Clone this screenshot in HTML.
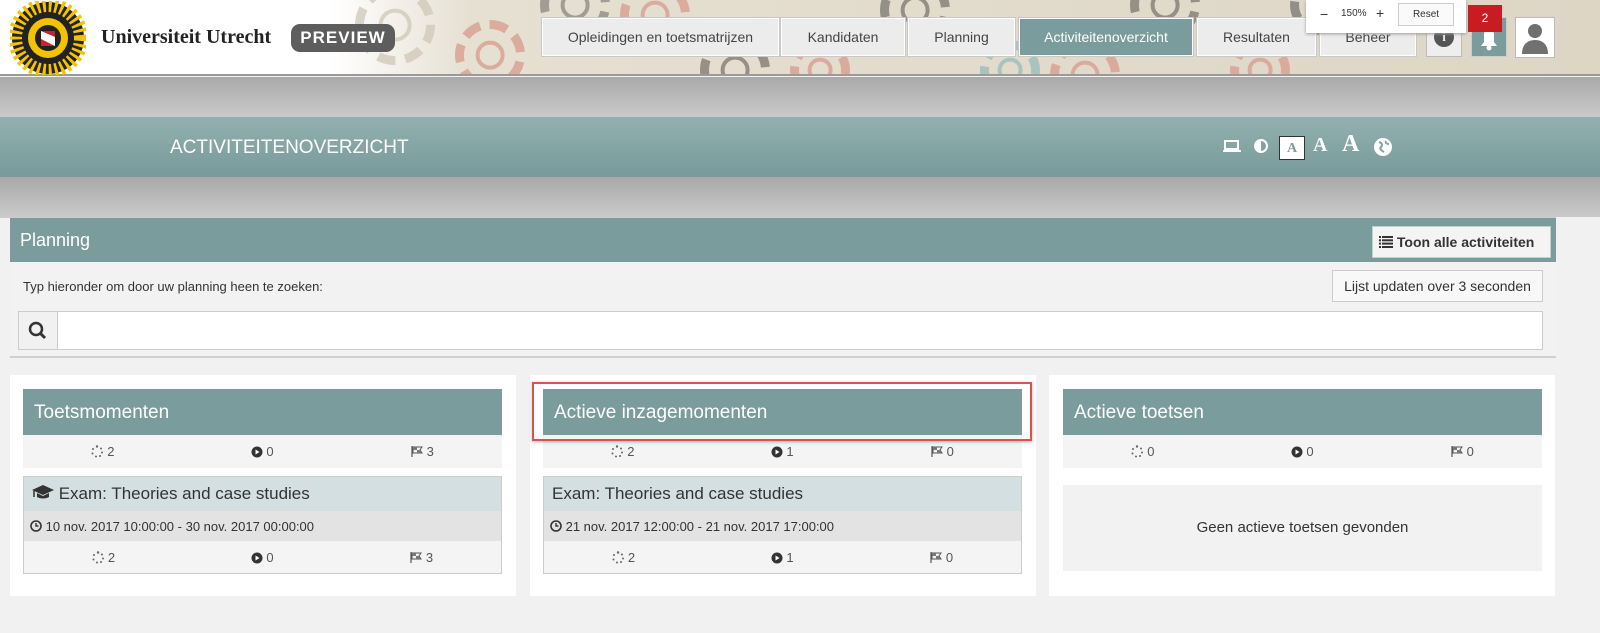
<!DOCTYPE html>
<html><head><meta charset="utf-8"><style>
*{box-sizing:border-box;margin:0;padding:0}
body{width:1600px;height:633px;overflow:hidden;background:#f1f1f1;font-family:"Liberation Sans",sans-serif;position:relative;color:#333}
.a{position:absolute}
.hdr{left:0;top:0;width:1600px;height:76px;background:linear-gradient(90deg,#fff 0,#fff 330px,#e6e0d2 470px,#ddd6c5 100%);overflow:hidden;border-bottom:2px solid #9a9a9a}
.g{position:absolute;border-radius:50%;border:9px dashed;opacity:.75}
.g::after{content:"";position:absolute;left:50%;top:50%;width:40%;height:40%;transform:translate(-50%,-50%);border-radius:50%;border:4px solid;border-color:inherit}
.nav{top:18px;height:38px;background:#ececec;border:1px solid #fff;box-shadow:0 0 0 1px #c8c8c8;font-size:14px;color:#444;display:flex;align-items:center;justify-content:center}
.band{left:0;width:1600px;height:41px;background:linear-gradient(#a9a9a9,#cbcbcb)}
.teal{left:0;top:117px;width:1600px;height:60px;background:linear-gradient(#93b0b0,#789a9a)}
.card{background:#fff}
.ch{background:#7a9c9c;color:#fff;font-size:19px;padding:13px 11px;height:46px}
.st{background:#f4f4f4;height:33px;display:flex;font-size:13px;color:#555;align-items:center}
.st span{flex:1;text-align:center}
.st svg{vertical-align:-2px;margin-right:3px}
.it{border:1px solid #ccc;background:#f4f4f4}
.ih{background:#d4dfe1;height:34px;font-size:17px;padding:7px 8px;color:#333}
.id{background:#e3e3e3;height:30px;font-size:13px;padding:8px 6px;color:#333}
</style></head><body>
<svg width="0" height="0" style="position:absolute"><defs>
<g id="sp"><g fill="#666"><circle cx="6" cy="1.5" r="1.2"/><circle cx="10" cy="3.5" r="1"/><circle cx="11" cy="7.5" r="1"/><circle cx="9" cy="11" r="1"/><circle cx="5" cy="11.5" r="1"/><circle cx="1.5" cy="8.5" r="1"/><circle cx="2" cy="4" r="1"/></g></g>
<g id="pl"><circle cx="6" cy="6" r="5.5" fill="#333"/><path d="M4.5 3.5v5l4-2.5z" fill="#fff"/></g>
<g id="fl"><path d="M1 1v11" stroke="#555" stroke-width="1.2"/><path d="M2 2h9l-2 3 2 3H2z" fill="none" stroke="#555"/><path d="M2 2h4v3H2zM6 5h4v3H6z" fill="#777"/></g>
</defs></svg>
<div class="a hdr">
 <div class="g" style="left:355px;top:-15px;width:80px;height:80px;border-color:#cfc8b8"></div>
 <div class="g" style="left:455px;top:20px;width:70px;height:70px;border-color:#d89b8c"></div>
 <div class="g" style="left:540px;top:-30px;width:70px;height:70px;border-color:#8c8780"></div>
 <div class="g" style="left:620px;top:-20px;width:70px;height:70px;border-color:#d89b8c"></div>
 <div class="g" style="left:700px;top:35px;width:70px;height:70px;border-color:#7c7770"></div>
 <div class="g" style="left:790px;top:40px;width:60px;height:60px;border-color:#d89b8c"></div>
 <div class="g" style="left:880px;top:-25px;width:70px;height:70px;border-color:#7c7770"></div>
 <div class="g" style="left:980px;top:40px;width:60px;height:60px;border-color:#9bb"></div>
 <div class="g" style="left:1050px;top:40px;width:70px;height:70px;border-color:#d89b8c"></div>
 <div class="g" style="left:1130px;top:-30px;width:70px;height:70px;border-color:#7c7770"></div>
 <div class="g" style="left:1230px;top:40px;width:60px;height:60px;border-color:#d89b8c"></div>
 <div class="g" style="left:1290px;top:-25px;width:60px;height:60px;border-color:#7c7770"></div>
</div>
<svg class="a" style="left:10px;top:1px" width="76" height="74" viewBox="0 0 76 74"><circle cx="38" cy="37" r="36" fill="#222"/><circle cx="38" cy="37" r="33" fill="none" stroke="#f3c300" stroke-width="14" stroke-dasharray="3 3"/><circle cx="38" cy="37" r="20" fill="#f3c300"/><circle cx="38" cy="37" r="13" fill="#222"/><rect x="31" y="30" width="14" height="15" fill="#fff"/><path d="M31 30h14v6z" fill="#c0262d"/><path d="M31 38l14 7H31z" fill="#c0262d"/></svg>
<div class="a" style="left:101px;top:26px;font-family:'Liberation Serif',serif;font-weight:bold;font-size:20px;color:#222">Universiteit Utrecht</div>
<div class="a" style="left:291px;top:24px;width:104px;height:28px;border-radius:9px;background:#5d5d5d;color:#fff;font-weight:bold;font-size:17px;text-align:center;line-height:28px;letter-spacing:1px">PREVIEW</div>
<div class="a nav" style="left:542px;width:237px">Opleidingen en toetsmatrijzen</div>
<div class="a nav" style="left:781px;width:124px">Kandidaten</div>
<div class="a nav" style="left:908px;width:107px">Planning</div>
<div class="a nav" style="left:1019px;width:174px;background:#7a9c9c;color:#fff">Activiteitenoverzicht</div>
<div class="a nav" style="left:1197px;width:119px">Resultaten</div>
<div class="a nav" style="left:1320px;width:96px">Beheer</div>
<div class="a" style="left:1426px;top:17px;width:36px;height:40px;background:#eee;border:1px solid #bbb"><div style="margin:9px auto;width:20px;height:20px;border-radius:50%;background:#555;color:#eee;font:bold 13px 'Liberation Serif';text-align:center;line-height:20px">i</div></div>
<div class="a" style="left:1471px;top:17px;width:36px;height:40px;background:#7a9c9c;border:1px solid #ccc"><svg width="34" height="38"><path d="M9 28h16l-3-4v-8a5 5 0 0 0-10 0v8z" fill="#fff"/><circle cx="17" cy="30" r="2.5" fill="#fff"/></svg></div>
<div class="a" style="left:1515px;top:17px;width:40px;height:41px;background:#fff;border:1px solid #bbb"><svg width="38" height="39"><circle cx="19" cy="13" r="7" fill="#707070"/><path d="M6 36c0-10 6-14 13-14s13 4 13 14z" fill="#707070"/></svg></div>
<div class="a" style="left:1306px;top:0;width:160px;height:33px;background:#fff;box-shadow:0 1px 3px #999"></div>
<div class="a" style="left:1320px;top:6px;font-size:14px;color:#333">−</div>
<div class="a" style="left:1341px;top:8px;font-size:10px;color:#333">150%</div>
<div class="a" style="left:1376px;top:5px;font-size:14px;color:#333">+</div>
<div class="a" style="left:1398px;top:3px;width:56px;height:23px;border:1px solid #ccc;background:#fafafa;font-size:10px;text-align:center;line-height:21px">Reset</div>
<div class="a" style="left:1468px;top:5px;width:34px;height:27px;background:#c61c22;color:#fff;font-size:12px;text-align:center;line-height:26px">2</div>
<div class="a band" style="top:77px"></div>
<div class="a teal"></div>
<div class="a" style="left:170px;top:137px;color:#fff;font-size:19px">ACTIVITEITENOVERZICHT</div>
<div class="a" style="left:1222px;top:137px;width:20px;height:18px"><svg width="20" height="18"><rect x="3" y="4" width="13" height="8" fill="none" stroke="#fff" stroke-width="2"/><rect x="1" y="13" width="18" height="2" fill="#fff"/></svg></div>
<div class="a" style="left:1253px;top:138px"><svg width="16" height="16"><circle cx="8" cy="8" r="7" fill="#fff"/><path d="M8 3a5 5 0 0 1 0 10z" fill="#84a4a4"/></svg></div>
<div class="a" style="left:1279px;top:136px;width:26px;height:24px;background:#fff;border:1px solid #333;color:#7a9c9c;font:bold 14px 'Liberation Serif';text-align:center;line-height:24px">A</div>
<div class="a" style="left:1313px;top:134px;color:#fff;font:bold 20px 'Liberation Serif'">A</div>
<div class="a" style="left:1342px;top:131px;color:#fff;font:bold 24px 'Liberation Serif'">A</div>
<div class="a" style="left:1374px;top:138px"><svg width="18" height="18"><circle cx="9" cy="9" r="9" fill="#fff"/><path d="M5 4c3 1 4 3 2 5s1 4 3 5M12 3c-1 2 1 3 3 3" stroke="#84a4a4" stroke-width="2" fill="none"/></svg></div>
<div class="a band" style="top:177px"></div>
<div class="a" style="left:1556px;top:217px;width:44px;height:416px;background:#f1f1f1"></div>
<div class="a" style="left:10px;top:218px;width:1546px;height:44px;background:#7a9c9c"></div>
<div class="a" style="left:20px;top:230px;color:#fff;font-size:18px">Planning</div>
<div class="a" style="left:1372px;top:226px;width:179px;height:32px;background:#f4f4f4;border:1px solid #ccc;font-weight:bold;font-size:14px;color:#333;line-height:30px;padding-left:6px"><svg width="14" height="12" style="vertical-align:-1px"><g fill="#333"><rect x="0" y="0" width="2" height="2"/><rect x="3" y="0" width="11" height="2"/><rect x="0" y="3.3" width="2" height="2"/><rect x="3" y="3.3" width="11" height="2"/><rect x="0" y="6.6" width="2" height="2"/><rect x="3" y="6.6" width="11" height="2"/><rect x="0" y="10" width="2" height="2"/><rect x="3" y="10" width="11" height="2"/></g></svg> Toon alle activiteiten</div>
<div class="a" style="left:10px;top:262px;width:1546px;height:96px;background:#f2f2f2;border-bottom:2px solid #d0d0d0"></div>
<div class="a" style="left:23px;top:279px;font-size:13px;color:#333">Typ hieronder om door uw planning heen te zoeken:</div>
<div class="a" style="left:1332px;top:270px;width:211px;height:32px;background:#f8f8f8;border:1px solid #ccc;font-size:14px;text-align:center;line-height:30px">Lijst updaten over 3 seconden</div>
<div class="a" style="left:18px;top:311px;width:1525px;height:39px;background:#fff;border:1px solid #ccc"></div>
<div class="a" style="left:18px;top:311px;width:40px;height:39px;background:#f1f1f1;border:1px solid #ccc"><svg width="38" height="37"><circle cx="17" cy="17" r="6" fill="none" stroke="#333" stroke-width="2.5"/><path d="M21 21l5 5" stroke="#333" stroke-width="3"/></svg></div>

<div class="a card" style="left:10px;top:375px;width:506px;height:221px"></div>
<div class="a card" style="left:530px;top:375px;width:506px;height:221px"></div>
<div class="a card" style="left:1049px;top:375px;width:506px;height:221px"></div>

<div class="a" style="left:23px;top:389px;width:479px"><div class="ch">Toetsmomenten</div><div class="st"><span><svg width="13" height="13"><use href="#sp"/></svg>2</span><span><svg width="12" height="12"><use href="#pl"/></svg>0</span><span><svg width="13" height="13"><use href="#fl"/></svg>3</span></div>
<div class="it" style="margin-top:8px"><div class="ih"><svg width="22" height="16" style="vertical-align:-1px"><path d="M0 6l11-5 11 5-11 5z" fill="#333"/><path d="M5 9v4c3 2 9 2 12 0V9l-6 3z" fill="#333"/><path d="M2 7v6" stroke="#333" stroke-width="1.5"/></svg> Exam: Theories and case studies</div><div class="id"><svg width="12" height="12" style="vertical-align:-1px"><circle cx="6" cy="6" r="5" fill="none" stroke="#333" stroke-width="1.6"/><path d="M6 3v3h2.5" stroke="#333" stroke-width="1.4" fill="none"/></svg> 10 nov. 2017 10:00:00 - 30 nov. 2017 00:00:00</div><div class="st" style="height:32px"><span><svg width="13" height="13"><use href="#sp"/></svg>2</span><span><svg width="12" height="12"><use href="#pl"/></svg>0</span><span><svg width="13" height="13"><use href="#fl"/></svg>3</span></div></div></div>

<div class="a" style="left:543px;top:389px;width:479px"><div class="ch">Actieve inzagemomenten</div><div class="st"><span><svg width="13" height="13"><use href="#sp"/></svg>2</span><span><svg width="12" height="12"><use href="#pl"/></svg>1</span><span><svg width="13" height="13"><use href="#fl"/></svg>0</span></div>
<div class="it" style="margin-top:8px"><div class="ih">Exam: Theories and case studies</div><div class="id"><svg width="12" height="12" style="vertical-align:-1px"><circle cx="6" cy="6" r="5" fill="none" stroke="#333" stroke-width="1.6"/><path d="M6 3v3h2.5" stroke="#333" stroke-width="1.4" fill="none"/></svg> 21 nov. 2017 12:00:00 - 21 nov. 2017 17:00:00</div><div class="st" style="height:32px"><span><svg width="13" height="13"><use href="#sp"/></svg>2</span><span><svg width="12" height="12"><use href="#pl"/></svg>1</span><span><svg width="13" height="13"><use href="#fl"/></svg>0</span></div></div></div>
<div class="a" style="left:532px;top:382px;width:500px;height:59px;border:2px solid #d9534f;box-shadow:0 1px 3px rgba(0,0,0,.3)"></div>

<div class="a" style="left:1063px;top:389px;width:479px"><div class="ch">Actieve toetsen</div><div class="st"><span><svg width="13" height="13"><use href="#sp"/></svg>0</span><span><svg width="12" height="12"><use href="#pl"/></svg>0</span><span><svg width="13" height="13"><use href="#fl"/></svg>0</span></div>
<div style="margin-top:17px;height:86px;background:#f2f2f2;font-size:15px;text-align:center;line-height:86px;color:#333">Geen actieve toetsen gevonden</div></div>
</body></html>
